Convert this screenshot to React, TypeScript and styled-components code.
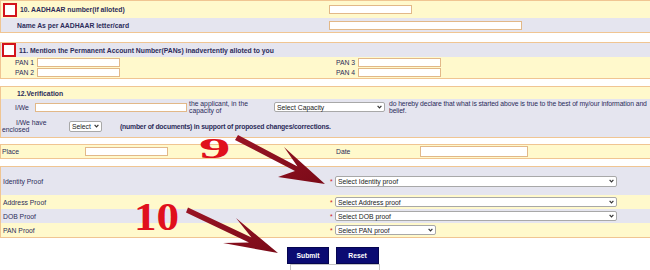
import React from 'react';
import styled, { createGlobalStyle } from 'styled-components';

const GlobalStyle = createGlobalStyle`
  html, body {
    margin: 0;
    padding: 0;
    background: #fff;
  }
`;

const ORANGE = '#f0c592';
const YELLOW = '#fff9cc';
const LAVENDER = '#e5e5ef';
const NAVY = '#2c2c5a';

type Tone = 'yellow' | 'lavender';

const Page = styled.div`
  position: relative;
  width: 650px;
  height: 270px;
  overflow: hidden;
  font-family: "Liberation Sans", Arial, sans-serif;
  font-size: 6.8px;
  line-height: 7px;
  color: ${NAVY};
`;

const Block = styled.section<{ $after: number }>`
  border: 1px solid ${ORANGE};
  border-right: none;
  margin-bottom: ${p => p.$after}px;
`;

const Row = styled.div<{ $tone: Tone; $h: number; $cols?: string }>`
  display: grid;
  grid-template-columns: ${p => p.$cols ?? '328px 1fr'};
  align-items: center;
  height: ${p => p.$h}px;
  background: ${p => (p.$tone === 'yellow' ? YELLOW : LAVENDER)};
`;

const Heading = styled.div<{ $pl: number }>`
  display: flex;
  align-items: center;
  gap: 3px;
  padding-left: ${p => p.$pl}px;
  font-weight: bold;
`;

const Check = styled.span`
  display: inline-block;
  box-sizing: border-box;
  width: 14px;
  height: 14px;
  border: 2px solid #d3131b;
  background: #fff;
`;

const Label = styled.span<{ $pl?: number; $bold?: boolean; $w?: number }>`
  display: block;
  box-sizing: border-box;
  padding-left: ${p => p.$pl ?? 0}px;
  font-weight: ${p => (p.$bold ? 'bold' : 'normal')};
  white-space: nowrap;
  ${p => (p.$w ? `width: ${p.$w}px; flex: none;` : '')}
`;

const Field = styled.input<{ $w: number; $h: number }>`
  display: block;
  box-sizing: border-box;
  width: ${p => p.$w}px;
  height: ${p => p.$h}px;
  margin: 0;
  padding: 0 2px;
  border: 1px solid #e2b888;
  background: #fff;
  font: inherit;
  outline: none;
`;

const SelectBox = styled.div<{ $w: number; $h: number }>`
  display: flex;
  align-items: center;
  justify-content: space-between;
  gap: 2px;
  box-sizing: border-box;
  width: ${p => p.$w}px;
  height: ${p => p.$h}px;
  padding: 0 2px;
  border: 1px solid #a8a8a8;
  border-radius: 2px;
  background: #fff;
  color: #222;
  font-weight: normal;
  font-size: 6.8px;
  white-space: nowrap;
`;

const PanGrid = styled.div`
  display: grid;
  grid-template-columns: 328px 1fr;
  grid-auto-rows: 9px;
  row-gap: 1px;
  padding-top: 1px;
  height: 21px;
  box-sizing: border-box;
  background: ${YELLOW};
`;

const Pair = styled.div`
  display: flex;
  align-items: center;
`;

const Verify = styled.div`
  display: flex;
  flex-direction: column;
  gap: 5px;
  height: 38px;
  box-sizing: border-box;
  padding-top: 1px;
  background: ${LAVENDER};
`;

const VerifyLine = styled.div`
  display: grid;
  grid-template-columns: 34px 154px 85px 113px 1fr;
  align-items: center;
  height: 14px;
`;

const EnclosedLine = styled.div`
  display: flex;
  align-items: center;
  height: 14px;
`;

const Indented = styled.span`
  display: block;
  width: 44px;
  flex: none;
  padding-left: 1px;
  text-indent: 14px;
  white-space: nowrap;
`;

const Gap = styled.span<{ $w: number }>`
  display: block;
  flex: none;
  width: ${p => p.$w}px;
`;

const Note = styled.span<{ $pl?: number; $bold?: boolean; $ls: number }>`
  display: block;
  padding-left: ${p => p.$pl ?? 0}px;
  font-weight: ${p => (p.$bold ? 'bold' : 'normal')};
  letter-spacing: ${p => p.$ls}px;
  white-space: nowrap;
`;

const ProofCell = styled.div`
  display: flex;
  align-items: center;
  gap: 1px;
  padding-left: 1px;
`;

const Star = styled.span`
  color: #d01818;
  width: 4px;
  font-weight: normal;
`;

const Actions = styled.div`
  display: flex;
  gap: 7px;
  padding-left: 287px;
  margin-top: 9px;
`;

const Button = styled.button<{ $w: number }>`
  width: ${p => p.$w}px;
  height: 17px;
  margin: 0;
  padding: 0;
  border: 1px solid #05054f;
  background: #0b0b72;
  color: #fff;
  font-family: "Liberation Sans", Arial, sans-serif;
  font-size: 6.8px;
  font-weight: bold;
`;

const Drop = styled.div`
  margin-left: 290px;
  width: 90px;
  height: 10px;
  box-sizing: border-box;
  border: 1px solid #c4c4c4;
  border-bottom: none;
  background: #fff;
`;

const Overlay = styled.svg`
  position: absolute;
  left: 0;
  top: 0;
  pointer-events: none;
`;

const Chevron = () => (
  <svg width="5" height="4" viewBox="0 0 5 4" style={{ flex: 'none' }}>
    <path d="M0.6 0.8 L2.5 2.8 L4.4 0.8" fill="none" stroke="#333" strokeWidth="1.2" />
  </svg>
);

const Select = ({ w, h, text }: { w: number; h: number; text: string }) => (
  <SelectBox $w={w} $h={h}>
    <span>{text}</span>
    <Chevron />
  </SelectBox>
);

const proofs: { label: string; text: string; tone: Tone; h: number; w: number; sh: number }[] = [
  { label: 'Identity Proof', text: 'Select Identity proof', tone: 'lavender', h: 28, w: 282, sh: 11 },
  { label: 'Address Proof', text: 'Select Address proof', tone: 'yellow', h: 14, w: 282, sh: 10 },
  { label: 'DOB Proof', text: 'Select DOB proof', tone: 'lavender', h: 14, w: 282, sh: 10 },
  { label: 'PAN Proof', text: 'Select PAN proof', tone: 'yellow', h: 14, w: 101, sh: 10 },
];

export default function App() {
  return (
    <Page>
      <GlobalStyle />

      <Block $after={9}>
        <Row $tone="yellow" $h={17}>
          <Heading $pl={2}>
            <Check />
            <span>10. AADHAAR number(if alloted)</span>
          </Heading>
          <Field $w={83} $h={9} readOnly />
        </Row>
        <Row $tone="lavender" $h={14}>
          <Label $pl={16} $bold>Name As per AADHAAR letter/card</Label>
          <Field $w={193} $h={9} readOnly />
        </Row>
      </Block>

      <Block $after={7}>
        <Row $tone="lavender" $h={14} $cols="1fr">
          <Heading $pl={1}>
            <Check />
            <span>11. Mention the Permanent Account Number(PANs) inadvertently alloted to you</span>
          </Heading>
        </Row>
        <PanGrid>
          <Pair>
            <Label $pl={14} $w={36}>PAN 1</Label>
            <Field $w={83} $h={9} readOnly />
          </Pair>
          <Pair>
            <Label $pl={7} $w={29}>PAN 3</Label>
            <Field $w={83} $h={9} readOnly />
          </Pair>
          <Pair>
            <Label $pl={14} $w={36}>PAN 2</Label>
            <Field $w={83} $h={9} readOnly />
          </Pair>
          <Pair>
            <Label $pl={7} $w={29}>PAN 4</Label>
            <Field $w={83} $h={9} readOnly />
          </Pair>
        </PanGrid>
      </Block>

      <Block $after={6}>
        <Row $tone="yellow" $h={12} $cols="1fr">
          <Label $pl={16} $bold>12.Verification</Label>
        </Row>
        <Verify>
          <VerifyLine>
            <Label $pl={14}>I/We</Label>
            <Field $w={152} $h={9} readOnly />
            <Label $pl={0}>the applicant, in the<br />capacity of</Label>
            <Select w={111} h={10} text="Select Capacity" />
            <Note $pl={2} $ls={-0.1}>do hereby declare that what is started above is true to the best of my/our information and<br />belief.</Note>
          </VerifyLine>
          <EnclosedLine>
            <Indented>I/We have<br />enclosed</Indented>
            <Gap $w={23} />
            <Select w={33} h={11} text="Select" />
            <Gap $w={18} />
            <Note $bold $ls={-0.18}>(number of documents) in support of proposed changes/corrections.</Note>
          </EnclosedLine>
        </Verify>
      </Block>

      <Block $after={7}>
        <Row $tone="yellow" $h={13} $cols="84px 244px 91px 1fr">
          <Label $pl={1}>Place</Label>
          <Field $w={83} $h={9} readOnly />
          <Label $pl={7}>Date</Label>
          <Field $w={108} $h={11} readOnly />
        </Row>
      </Block>

      <Block $after={0}>
        {proofs.map(p => (
          <Row key={p.label} $tone={p.tone} $h={p.h}>
            <Label $pl={2}>{p.label}</Label>
            <ProofCell>
              <Star>*</Star>
              <Select w={p.w} h={p.sh} text={p.text} />
            </ProofCell>
          </Row>
        ))}
      </Block>

      <Actions>
        <Button $w={42}>Submit</Button>
        <Button $w={43}>Reset</Button>
      </Actions>
      <Drop />

      <Overlay width="650" height="270" viewBox="0 0 650 270">
        <defs>
          <linearGradient id="arrowFill" x1="0" y1="0" x2="1" y2="1">
            <stop offset="0" stopColor="#9a1424" />
            <stop offset="1" stopColor="#7a0a18" />
          </linearGradient>
        </defs>
        <polygon
          points="238,135 297.5,166.5 284,147 325,184 278,177 295,171 235,140"
          fill="url(#arrowFill)"
        />
        <polygon
          points="188,207.5 251.5,237.5 236,218 278,253 223,243 249,242.5 186,212.5"
          fill="url(#arrowFill)"
        />
        <text
          transform="translate(199,158) scale(2.1,0.95)"
          fontFamily='"Liberation Serif", "Times New Roman", serif'
          fontWeight="bold"
          fontSize="30"
          fill="#e0101c"
        >
          9
        </text>
        <text
          transform="translate(134,230) scale(1.1,1)"
          fontFamily='"Liberation Serif", "Times New Roman", serif'
          fontWeight="bold"
          fontSize="41"
          fill="#e0101c"
        >
          10
        </text>
      </Overlay>
    </Page>
  );
}
